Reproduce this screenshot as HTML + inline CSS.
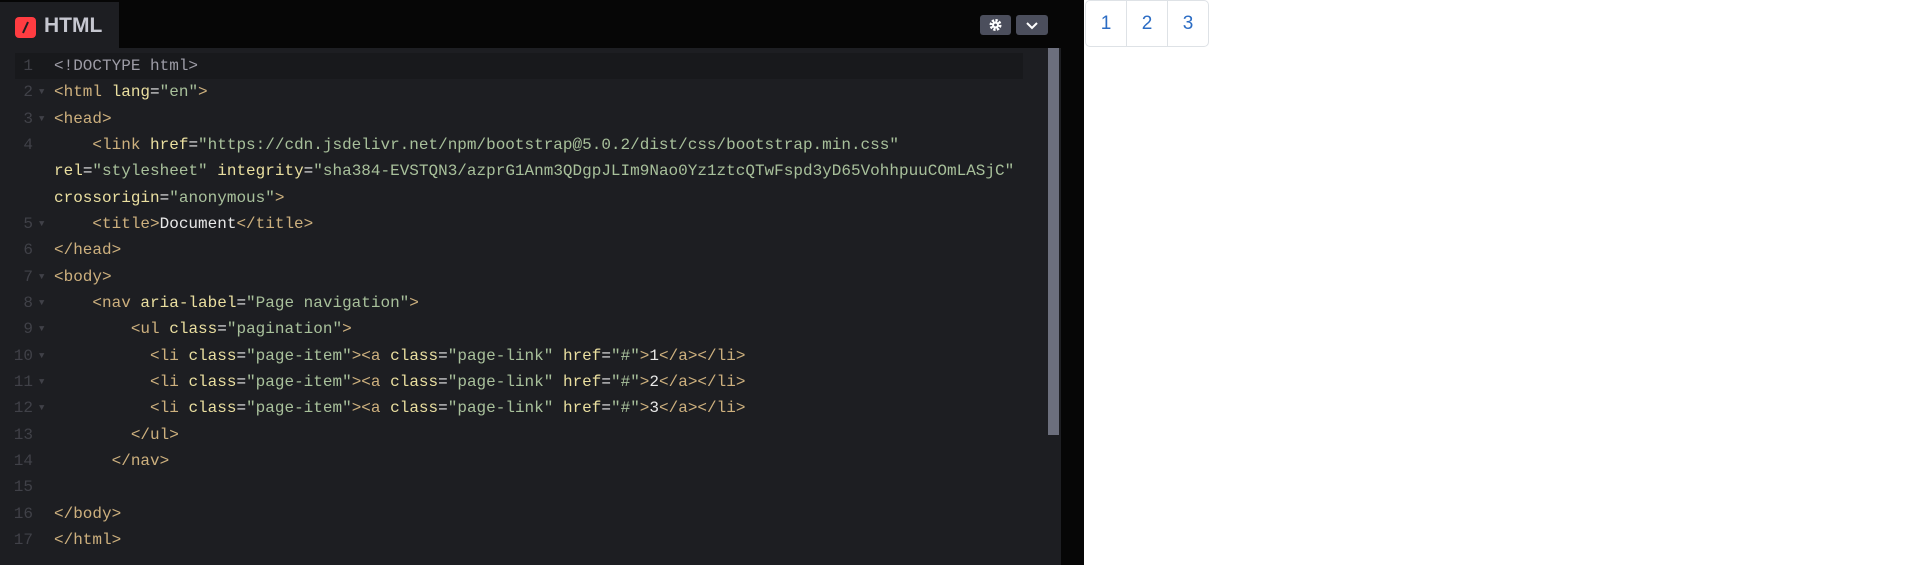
<!DOCTYPE html>
<html><head><style>
body{margin:0;width:1920px;height:565px;overflow:hidden;background:#fff;font-family:"Liberation Sans",sans-serif;position:relative}
#ed{position:absolute;left:0;top:0;width:1061px;height:565px;background:#1d1e22}
#hdr{position:absolute;left:0;top:0;width:1061px;height:48px;background:#060606}
#tab{position:absolute;left:0;top:2px;width:119px;height:46px;background:#1d1e22}
#icon{position:absolute;left:15px;top:15px;width:21px;height:21px;background:#ff3c41;border-radius:4px}
#tab .t{position:absolute;left:44px;top:12px;color:#c6c7d0;font-weight:bold;font-size:21px}
.btn{position:absolute;top:15px;height:20px;background:#4b4e5c;border-radius:3px}
#gap{position:absolute;left:1061px;top:0;width:23px;height:565px;background:#060606}
#code{position:absolute;left:0;top:53px;width:1040px;font-family:"Liberation Mono",monospace;font-size:16px;line-height:26.33px;color:#fff}
.r{position:relative;height:26.33px}
.n{position:absolute;left:0;width:33px;text-align:right;color:#404148}
.a{position:absolute;left:39px;top:0;color:#404148;font-size:9px}
.c{position:absolute;left:54px;white-space:pre;color:#e8e8e8}
.tg{color:#cdb07e}.at{color:#eadfa0}.s{color:#a8c09b}.d{color:#9d9ca6}
#hl{position:absolute;left:15px;top:53px;width:1008px;height:26px;background:#18191c}
#sb{position:absolute;left:1048px;top:48px;width:11px;height:387px;background:#6c6f7d}
#pg{position:absolute;left:1085px;top:0;height:45px;border:1px solid #dee2e6;border-radius:5px;display:flex}
#pg div{width:40px;text-align:center;line-height:45px;color:#2b6cc4;font-size:19px;border-left:1px solid #dee2e6}
#pg div:first-child{border-left:none}
</style></head><body>
<div id="ed"></div>
<div id="hdr"></div>
<div id="tab"><div id="icon"><svg width="21" height="21"><line x1="8" y1="16" x2="13" y2="5" stroke="#1d1e22" stroke-width="2"/></svg></div><div class="t">HTML</div></div>
<div class="btn" style="left:980px;width:31px"><svg width="31" height="20"><circle cx="15.5" cy="10" r="4.5" fill="none" stroke="#fff" stroke-width="3" stroke-dasharray="2.2 1.3"/><circle cx="15.5" cy="10" r="3.5" fill="#fff"/><circle cx="15.5" cy="10" r="1.4" fill="#4b4e5c"/></svg></div>
<div class="btn" style="left:1016px;width:32px"><svg width="32" height="20"><path d="M11 8l5 5 5-5" fill="none" stroke="#fff" stroke-width="2"/></svg></div>
<div id="gap"></div>
<div id="hl"></div>
<div id="sb"></div>
<div id="code"><div class="r"><span class="n">1</span><span class="c d">&lt;!DOCTYPE html&gt;</span></div><div class="r"><span class="n">2</span><span class="a">▼</span><span class="c"><span class="tg">&lt;html</span> <span class="at">lang</span>=<span class="s">"en"</span><span class="tg">&gt;</span></span></div><div class="r"><span class="n">3</span><span class="a">▼</span><span class="c"><span class="tg">&lt;head&gt;</span></span></div><div class="r"><span class="n">4</span><span class="c">    <span class="tg">&lt;link</span> <span class="at">href</span>=<span class="s">"https://cdn.jsdelivr.net/npm/bootstrap@5.0.2/dist/css/bootstrap.min.css"</span></span></div><div class="r"><span class="c"><span class="at">rel</span>=<span class="s">"stylesheet"</span> <span class="at">integrity</span>=<span class="s">"sha384-EVSTQN3/azprG1Anm3QDgpJLIm9Nao0Yz1ztcQTwFspd3yD65VohhpuuCOmLASjC"</span></span></div><div class="r"><span class="c"><span class="at">crossorigin</span>=<span class="s">"anonymous"</span><span class="tg">&gt;</span></span></div><div class="r"><span class="n">5</span><span class="a">▼</span><span class="c">    <span class="tg">&lt;title&gt;</span>Document<span class="tg">&lt;/title&gt;</span></span></div><div class="r"><span class="n">6</span><span class="c"><span class="tg">&lt;/head&gt;</span></span></div><div class="r"><span class="n">7</span><span class="a">▼</span><span class="c"><span class="tg">&lt;body&gt;</span></span></div><div class="r"><span class="n">8</span><span class="a">▼</span><span class="c">    <span class="tg">&lt;nav</span> <span class="at">aria-label</span>=<span class="s">"Page navigation"</span><span class="tg">&gt;</span></span></div><div class="r"><span class="n">9</span><span class="a">▼</span><span class="c">        <span class="tg">&lt;ul</span> <span class="at">class</span>=<span class="s">"pagination"</span><span class="tg">&gt;</span></span></div><div class="r"><span class="n">10</span><span class="a">▼</span><span class="c">          <span class="tg">&lt;li</span> <span class="at">class</span>=<span class="s">"page-item"</span><span class="tg">&gt;&lt;a</span> <span class="at">class</span>=<span class="s">"page-link"</span> <span class="at">href</span>=<span class="s">"#"</span><span class="tg">&gt;</span>1<span class="tg">&lt;/a&gt;&lt;/li&gt;</span></span></div><div class="r"><span class="n">11</span><span class="a">▼</span><span class="c">          <span class="tg">&lt;li</span> <span class="at">class</span>=<span class="s">"page-item"</span><span class="tg">&gt;&lt;a</span> <span class="at">class</span>=<span class="s">"page-link"</span> <span class="at">href</span>=<span class="s">"#"</span><span class="tg">&gt;</span>2<span class="tg">&lt;/a&gt;&lt;/li&gt;</span></span></div><div class="r"><span class="n">12</span><span class="a">▼</span><span class="c">          <span class="tg">&lt;li</span> <span class="at">class</span>=<span class="s">"page-item"</span><span class="tg">&gt;&lt;a</span> <span class="at">class</span>=<span class="s">"page-link"</span> <span class="at">href</span>=<span class="s">"#"</span><span class="tg">&gt;</span>3<span class="tg">&lt;/a&gt;&lt;/li&gt;</span></span></div><div class="r"><span class="n">13</span><span class="c">        <span class="tg">&lt;/ul&gt;</span></span></div><div class="r"><span class="n">14</span><span class="c">      <span class="tg">&lt;/nav&gt;</span></span></div><div class="r"><span class="n">15</span><span class="c"></span></div><div class="r"><span class="n">16</span><span class="c"><span class="tg">&lt;/body&gt;</span></span></div><div class="r"><span class="n">17</span><span class="c"><span class="tg">&lt;/html&gt;</span></span></div></div>
<div id="pg"><div>1</div><div>2</div><div>3</div></div>
</body></html>
